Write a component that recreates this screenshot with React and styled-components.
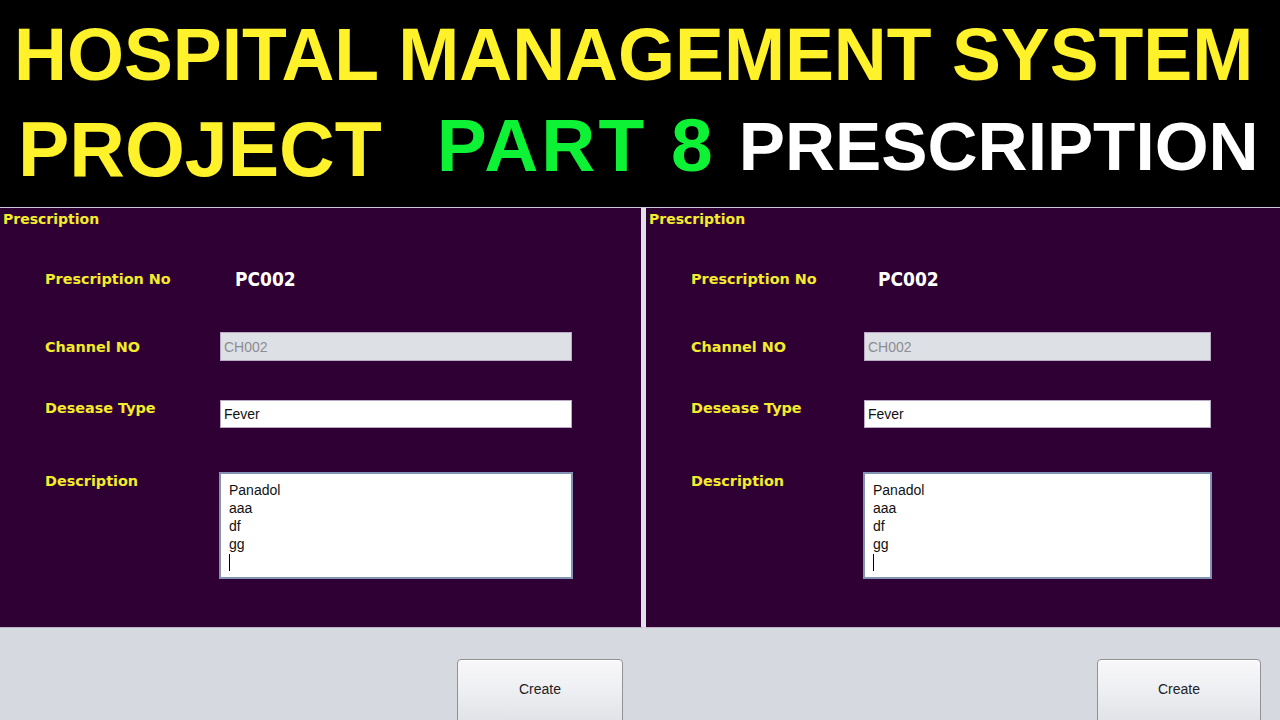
import styled, { createGlobalStyle } from "styled-components";

const GlobalStyle = createGlobalStyle`
  html, body {
    margin: 0;
    padding: 0;
    width: 1280px;
    height: 720px;
    overflow: hidden;
    background: #d6d9e0;
  }
`;

const Page = styled.div`
  width: 1280px;
  height: 720px;
  display: flex;
  flex-direction: column;
  overflow: hidden;
`;

const Banner = styled.header`
  flex-shrink: 0;
  height: 207px;
  background: #000;
  font-family: "Liberation Sans", Arial, sans-serif;
  font-weight: bold;
  overflow: hidden;
`;

const TitleLine = styled.div`
  display: flex;
  align-items: flex-start;
  white-space: nowrap;
`;

const Word = styled.span`
  display: block;
  font-size: ${(p) => p.$size}px;
  line-height: 1;
  color: ${(p) => p.$color};
  margin-left: ${(p) => p.$ml || 0}px;
  margin-top: ${(p) => p.$mt || 0}px;
  letter-spacing: ${(p) => p.$ls || 0}px;
`;

const Screens = styled.div`
  flex: 1;
  min-height: 0;
  display: grid;
  grid-template-columns: 646px 634px;
  border-top: 1px solid #cfc6dc;
  background: #d6d9e0;
`;

const Screen = styled.section`
  display: flex;
  flex-direction: column;
  min-height: 0;
`;

const Panel = styled.div`
  flex-shrink: 0;
  height: 419px;
  background: #2e0033;
  border-bottom: 1px solid #bdb3c9;
  border-right: ${(p) => (p.$divider ? "5px solid #e2e1ea" : "none")};
  font-family: "DejaVu Sans", Verdana, sans-serif;
  font-weight: bold;
  color: #f3ec2c;
`;

const PanelTitle = styled.div`
  font-size: 14px;
  line-height: 20px;
  padding: 1px 0 0 3px;
`;

const Form = styled.div`
  padding-left: 45px;
  display: flex;
  flex-direction: column;
`;

const Row = styled.div`
  display: flex;
  align-items: ${(p) => (p.$top ? "flex-start" : "center")};
  height: ${(p) => p.$h}px;
  margin-top: ${(p) => p.$mt}px;
`;

const Label = styled.div`
  width: ${(p) => p.$w}px;
  flex-shrink: 0;
  font-size: 14.4px;
  line-height: 16px;
  padding-top: ${(p) => p.$pt || 0}px;
`;

const Value = styled.div`
  color: #fff;
  font-family: "DejaVu Sans Condensed", "DejaVu Sans", sans-serif;
  font-stretch: condensed;
  font-size: 19px;
  line-height: 24px;
`;

const TextField = styled.div`
  box-sizing: border-box;
  width: ${(p) => p.$w}px;
  height: 100%;
  border: 1px solid #b9a9c4;
  background: ${(p) => (p.$disabled ? "#dde0e5" : "#fff")};
  color: ${(p) => (p.$disabled ? "#8c8c92" : "#111")};
  font-family: "Liberation Sans", Arial, sans-serif;
  font-weight: normal;
  font-size: 14px;
  padding-left: 3px;
  display: flex;
  align-items: center;
`;

const TextArea = styled.div`
  box-sizing: border-box;
  width: ${(p) => p.$w + 2}px;
  margin-left: -1px;
  height: 100%;
  border: 2px solid #8393b6;
  background: #fff;
  color: #111;
  font-family: "Liberation Sans", Arial, sans-serif;
  font-weight: normal;
  font-size: 14px;
  line-height: 18px;
  padding: 7px 0 0 8px;
`;

const Caret = styled.span`
  display: block;
  width: 1px;
  height: 17px;
  margin-top: 1px;
  background: #000;
`;

const Footer = styled.div`
  flex: 1;
  min-height: 0;
  overflow: hidden;
  display: flex;
  justify-content: flex-end;
  align-items: flex-start;
  padding-top: 31px;
  padding-right: ${(p) => p.$pr}px;
`;

const Button = styled.button`
  flex-shrink: 0;
  width: ${(p) => p.$w}px;
  height: 68px;
  border: 1px solid #919196;
  border-radius: 4px;
  background: linear-gradient(#f8f8fa 0%, #eeeff2 45%, #dfe1e6 100%);
  box-shadow: inset 0 1px 0 #fff;
  font-family: "Liberation Sans", Arial, sans-serif;
  font-size: 14px;
  color: #222;
  padding: 0 0 8px;
  display: flex;
  align-items: center;
  justify-content: center;
`;

function PrescriptionScreen({ fieldW, labelW, valueMl, btnW, btnPr, divider }) {
  return (
    <Screen>
      <Panel $divider={divider}>
        <PanelTitle>Prescription</PanelTitle>
        <Form>
          <Row $h={24} $mt={38}>
            <Label $w={labelW + valueMl}>Prescription No</Label>
            <Value>PC002</Value>
          </Row>
          <Row $h={29} $mt={41}>
            <Label $w={labelW}>Channel NO</Label>
            <TextField $w={fieldW} $disabled>
              CH002
            </TextField>
          </Row>
          <Row $h={28} $mt={39} $top>
            <Label $w={labelW} $pt={0}>
              Desease Type
            </Label>
            <TextField $w={fieldW}>Fever</TextField>
          </Row>
          <Row $h={107} $mt={44} $top>
            <Label $w={labelW} $pt={1}>
              Description
            </Label>
            <TextArea $w={fieldW}>
              <div>Panadol</div>
              <div>aaa</div>
              <div>df</div>
              <div>gg</div>
              <Caret />
            </TextArea>
          </Row>
        </Form>
      </Panel>
      <Footer $pr={btnPr + (divider ? 5 : 0)}>
        <Button $w={btnW}>Create</Button>
      </Footer>
    </Screen>
  );
}

export default function App() {
  return (
    <Page>
      <GlobalStyle />
      <Banner>
        <TitleLine>
          <Word $size={73.3} $color="#fff22a" $ml={14} $mt={19}>
            HOSPITAL MANAGEMENT SYSTEM
          </Word>
        </TitleLine>
        <TitleLine>
          <Word $size={77} $color="#fff22a" $ml={18} $mt={19}>
            PROJECT
          </Word>
          <Word $size={75} $color="#0ef235" $ml={55} $mt={16} $ls={3}>
            PART 8
          </Word>
          <Word $size={69.3} $color="#ffffff" $ml={23} $mt={20}>
            PRESCRIPTION
          </Word>
        </TitleLine>
      </Banner>
      <Screens>
        <PrescriptionScreen divider fieldW={352} labelW={175} valueMl={15} btnW={166} btnPr={18} />
        <PrescriptionScreen fieldW={347} labelW={173} valueMl={14} btnW={164} btnPr={19} />
      </Screens>
    </Page>
  );
}
